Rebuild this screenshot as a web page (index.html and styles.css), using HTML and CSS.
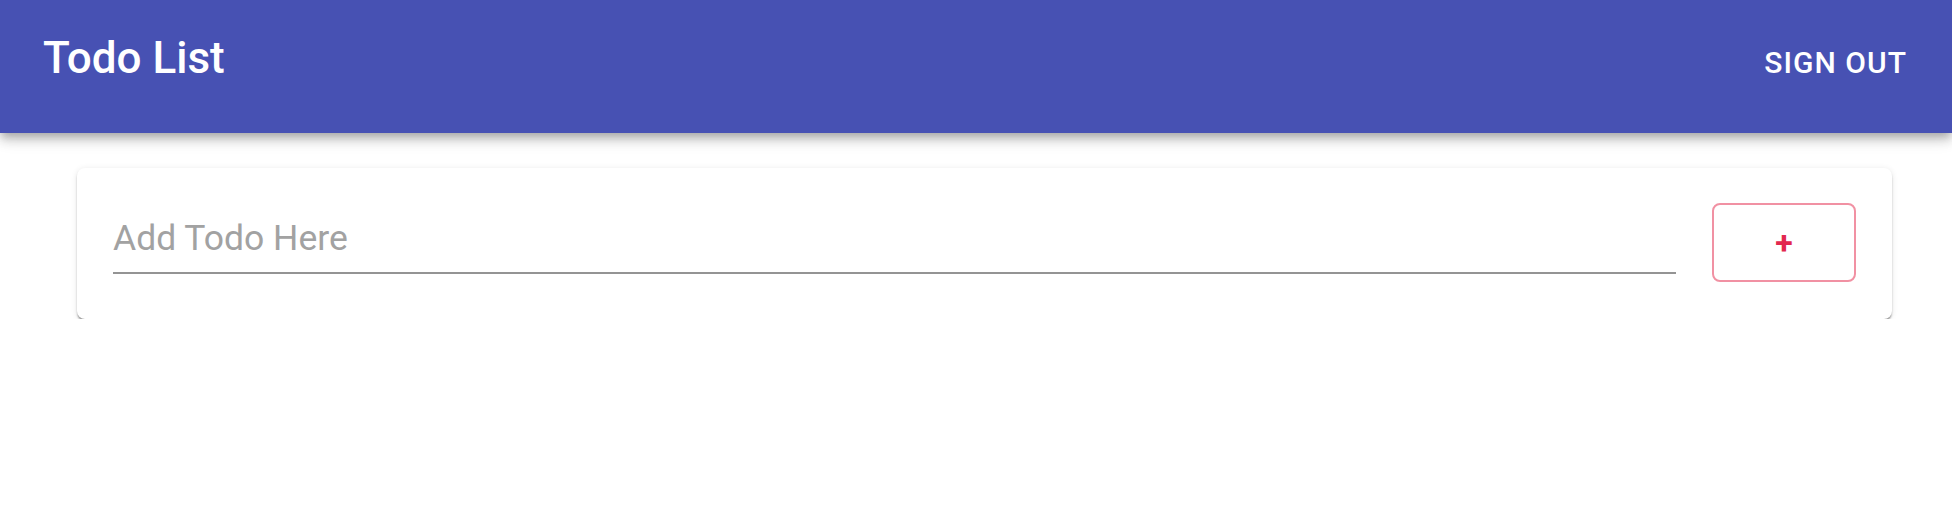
FILE: index.html
```html
<!DOCTYPE html>
<html>
<head>
<meta charset="utf-8">
<title>Todo List</title>
<link rel="stylesheet" href="styles.css">
</head>
<body>
<header class="appbar">
  <h1 class="title">Todo List</h1>
  <button class="signout">SIGN OUT</button>
</header>
<main class="content">
  <section class="card">
    <div class="field">
      <input class="todo-input" type="text" placeholder="Add Todo Here">
    </div>
    <button class="add-btn">+</button>
  </section>
</main>
</body>
</html>
```
FILE: styles.css
```css
* { box-sizing: border-box; }
html, body { margin: 0; padding: 0; background: #ffffff; }
body { font-family: Roboto, "Noto Sans", Arial, sans-serif; }

.appbar {
  height: 133px;
  background: #4751b3;
  display: flex;
  align-items: baseline;
  justify-content: space-between;
  padding: 32px 45px 0 43px;
  box-shadow: 0 4px 8px -2px rgba(0,0,0,0.2), 0 8px 10px 0 rgba(0,0,0,0.14), 0 2px 20px 0 rgba(0,0,0,0.12);
  position: relative;
  z-index: 1;
}
.title {
  margin: 0;
  font-size: 44px;
  line-height: 52px;
  font-weight: 500;
  color: #ffffff;
}
.signout {
  background: none;
  border: none;
  padding: 0;
  font-family: inherit;
  font-size: 30px;
  line-height: 36px;
  font-weight: 500;
  letter-spacing: 0.035em;
  color: #ffffff;
}

.content {
  padding: 35px 60px 0 77px;
}
.card {
  background: #fff;
  border-radius: 8px;
  height: 151px;
  padding: 35px 36px 0 36px;
  display: flex;
  align-items: flex-start;
  gap: 36px;
  box-shadow: 0 3px 2px -1px rgba(0,0,0,0.3), 0 2px 2px 0 rgba(0,0,0,0.16), 0 1px 6px 0 rgba(0,0,0,0.1);
}
.field {
  flex: 1;
}
.todo-input {
  display: block;
  width: 100%;
  height: 71px;
  padding: 1px 0 0 0;
  border: none;
  border-bottom: 2px solid #949494;
  outline: none;
  font-family: inherit;
  font-size: 35.5px;
  color: rgba(0,0,0,0.87);
  background: transparent;
}
.todo-input::placeholder {
  color: #a2a2a2;
  opacity: 1;
}
.add-btn {
  width: 144px;
  height: 79px;
  border: 2px solid #f191a3;
  border-radius: 8px;
  background: #fff;
  color: #e2284f;
  font-family: inherit;
  font-size: 32px;
  font-weight: 700;
  line-height: 1;
  padding: 0;
}
```
